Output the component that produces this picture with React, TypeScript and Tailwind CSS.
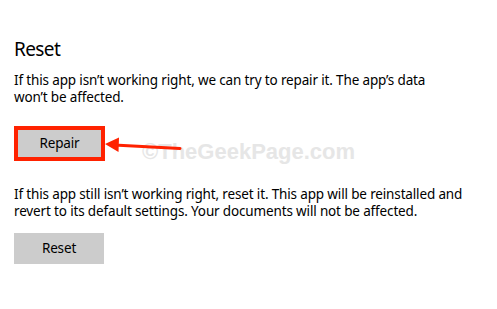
export default function App() {
  return (
    <div className="relative h-[309px] w-[497px] overflow-hidden bg-white px-[14px] text-black font-['Noto_Sans',sans-serif]">
      <h2 className="pt-[35px] text-[19px] leading-[28px] font-normal tracking-[-0.6px]">Reset</h2>
      <p className="mt-[9px] text-[13.5px] leading-[17px] tracking-[-0.15px]">
        <span className="block whitespace-nowrap">If this app isn’t working right, we can try to repair it. The app’s data</span>
        <span className="block whitespace-nowrap">won’t be affected.</span>
      </p>
      <div className="mt-[20px] flex h-[35px] w-[91px] items-center justify-center border-4 border-[#ff2200] bg-[#cccccc] text-[13.5px] tracking-[-0.15px]">
        Repair
      </div>
      <p className="mt-[25px] text-[13.5px] leading-[17px] tracking-[-0.15px]">
        <span className="block whitespace-nowrap">If this app still isn’t working right, reset it. This app will be reinstalled and</span>
        <span className="block whitespace-nowrap">revert to its default settings. Your documents will not be affected.</span>
      </p>
      <div className="mt-[13px] flex h-[31px] w-[90px] items-center justify-center bg-[#cccccc] text-[13.5px] tracking-[-0.15px]">
        Reset
      </div>

      {/* watermark */}
      <div className="pointer-events-none absolute left-[142px] top-[139px] text-[22px] leading-[26px] font-bold text-[#e6e6e6] font-['Liberation_Sans',sans-serif]">
        ©TheGeekPage.com
      </div>

      {/* annotation arrow */}
      <svg className="absolute left-0 top-0" width="497" height="309" viewBox="0 0 497 309">
        <line x1="114" y1="145" x2="180" y2="148.5" stroke="#ff2200" strokeWidth="3" strokeLinecap="round" />
        <polygon points="105,144 119,137.5 118.5,152" fill="#ff2200" />
      </svg>
    </div>
  );
}
